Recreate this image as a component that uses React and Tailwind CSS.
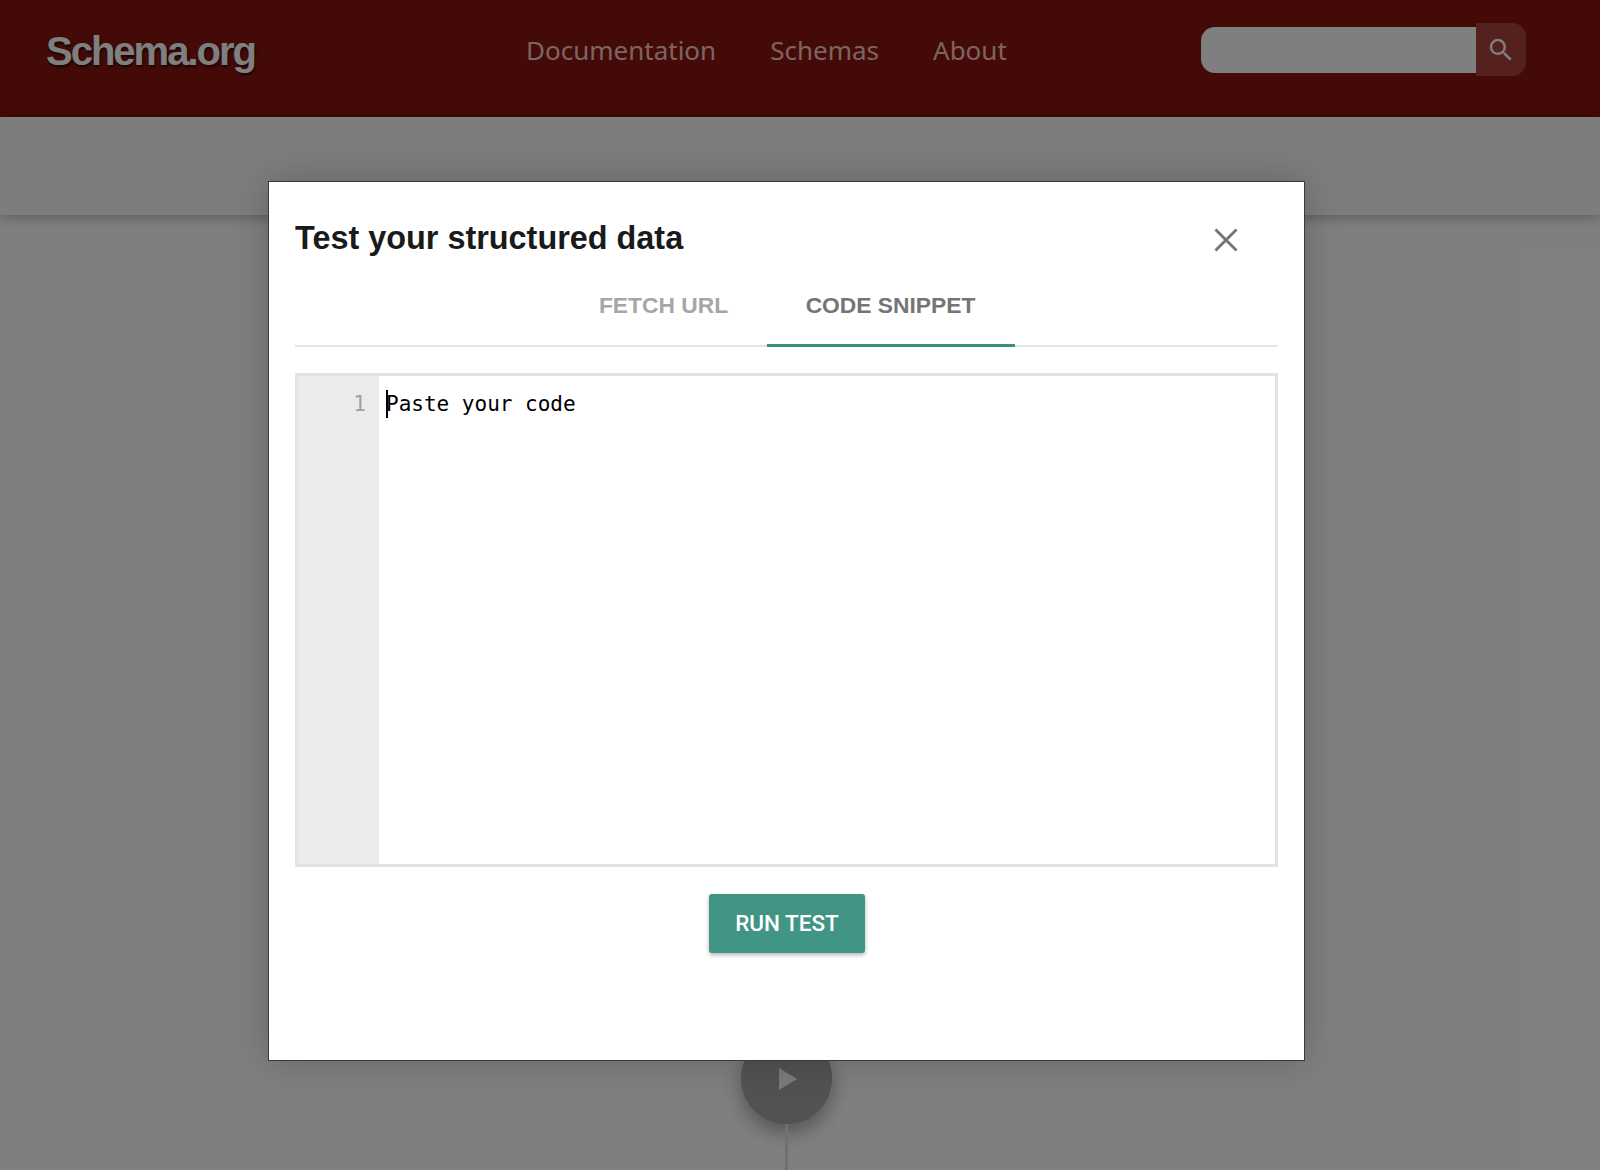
import React from "react";

function Search() {
  return (
    <svg viewBox="0 0 24 24" className="h-[30px] w-[30px]" fill="#ffffff">
      <path d="M15.5 14h-.79l-.28-.27A6.47 6.47 0 0 0 16 9.5 6.5 6.5 0 1 0 9.5 16c1.61 0 3.09-.59 4.23-1.57l.27.28v.79l5 4.99L20.49 19l-4.99-5zm-6 0C7.01 14 5 11.99 5 9.5S7.01 5 9.5 5 14 7.01 14 9.5 11.99 14 9.5 14z" />
    </svg>
  );
}

export default function App() {
  return (
    <div className="relative h-[1170px] w-full overflow-hidden bg-white">
      <header className="flex h-[117px] items-start bg-[#881510] pl-[46px] pr-[74px]">
        <div className="mt-[26px] w-[480px] font-['Liberation_Sans',sans-serif] text-[40px] leading-[50px] font-bold tracking-[-2px] text-white [text-shadow:1px_2px_3px_rgba(0,0,0,0.7)]">
          Schema.org
        </div>
        <nav className="mt-[30px] flex gap-[54px] font-['Noto_Sans',sans-serif] text-[26px] leading-[40px] text-[#f8c8c2]">
          <span>Documentation</span>
          <span>Schemas</span>
          <span>About</span>
        </nav>
        <div className="mt-[23px] ml-auto flex items-center">
          <div className="h-[46px] w-[275px] rounded-l-[14px] bg-white" />
          <div className="flex h-[53px] w-[50px] items-center justify-center rounded-r-[14px] bg-[#a8423e]">
            <Search />
          </div>
        </div>
      </header>
      <div className="h-[98px] bg-[#fafafa] shadow-[0_2px_12px_rgba(0,0,0,0.3)]" />
      <div className="flex flex-col items-center pt-[818px] pr-[27px]">
        <div className="flex h-[91px] w-[91px] shrink-0 items-center justify-center rounded-full bg-[#a4a4a4] shadow-[0_8px_20px_rgba(0,0,0,0.35)]">
          <svg viewBox="0 0 18 22" className="ml-[2px] h-[22px] w-[18px]" fill="#f6f6f6">
            <path d="M0 0 L18 11 L0 22 Z" />
          </svg>
        </div>
        <div className="h-[60px] w-[3px] bg-[#e0e0e0]" />
      </div>

      <div className="absolute inset-0 flex justify-center bg-black/50 pt-[181px] pr-[27px]">
        <div className="flex h-[880px] w-[1037px] flex-col border border-[#3a3a3a] bg-white px-[26px] shadow-[0_0_36px_rgba(0,0,0,0.2)]">
          <div className="flex h-[76px] items-end justify-between">
            <h2 className="font-['Liberation_Sans',sans-serif] text-[32.4px] leading-[40px] font-bold text-[#1a1a1a]">
              Test your structured data
            </h2>
            <svg viewBox="0 0 24 24" className="mr-[40px] mb-[6px] h-[24px] w-[24px]" stroke="#757575" strokeWidth="2.9" fill="none">
              <path d="M1.5 1.5 L22.5 22.5 M22.5 1.5 L1.5 22.5" />
            </svg>
          </div>
          <div className="mt-[11px] flex h-[78px] justify-center border-b-2 border-[#e4e4e4] pl-[2px] font-['Liberation_Sans',sans-serif] text-[22.8px] font-bold">
            <div className="flex h-[78px] w-[206px] items-center justify-center pb-[6px] text-[#a6a6a6]">FETCH URL</div>
            <div className="flex h-[78px] w-[248px] items-center justify-center border-b-[3px] border-[#3a8f80] pb-[3px] text-[#757575]">CODE SNIPPET</div>
          </div>
          <div className="mt-[26px] flex h-[494px] border-[3px] border-[#e3e3e3]">
            <div className="w-[81px] bg-[#ebebeb] pt-[12px] pr-[13px] text-right font-['DejaVu_Sans_Mono',monospace] text-[21px] leading-[32px] text-[#a0a0a0]">1</div>
            <div className="flex flex-1 items-start pt-[12px] pl-[7px] font-['DejaVu_Sans_Mono',monospace] text-[21px] leading-[32px] text-black">
              <span className="relative">
                <span className="absolute top-[2px] left-0 h-[28px] w-[1.5px] bg-black" />
                Paste your code
              </span>
            </div>
          </div>
          <div className="mt-[27px] flex justify-center pl-[1px]">
            <button className="h-[59px] w-[156px] rounded-[3px] bg-[#419585] font-['Roboto',sans-serif] text-[22.5px] font-medium text-white shadow-[0_2px_4px_rgba(0,0,0,0.3)]">
              RUN TEST
            </button>
          </div>
        </div>
      </div>
    </div>
  );
}
